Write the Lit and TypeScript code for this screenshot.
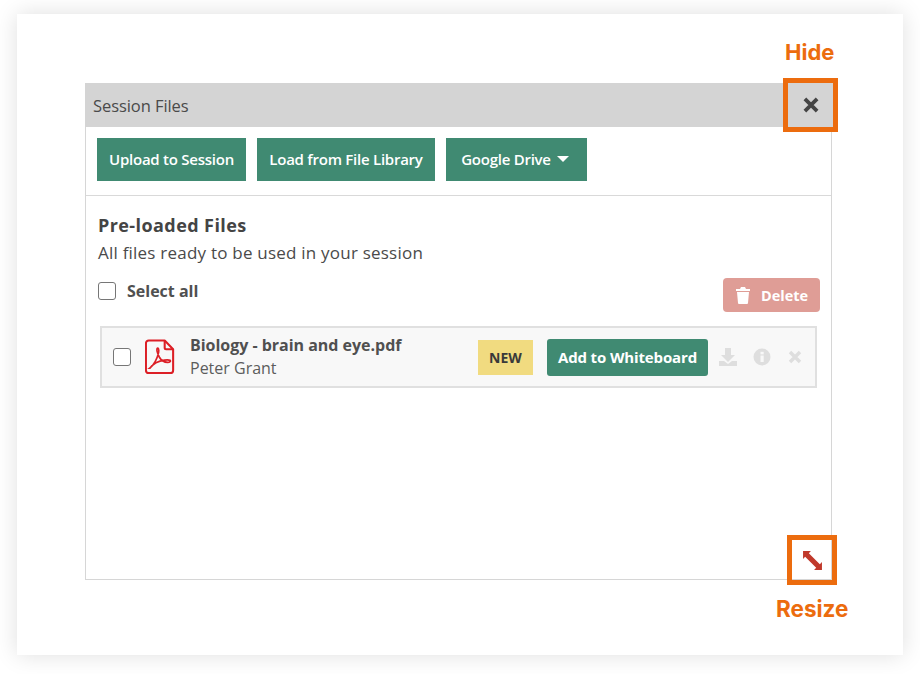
import { LitElement, html, css } from "lit";
import { customElement } from "lit/decorators.js";

@customElement("app-root")
export class AppRoot extends LitElement {
  static styles = css`
    :host { display: block; width: 920px; height: 674px; background: #fff; font-family: "Open Sans", sans-serif; color: #444; overflow: hidden; }
    .stage { box-sizing: border-box; width: 920px; height: 674px; padding: 14px 17px 19px; }
    .card { position: relative; box-sizing: border-box; height: 641px; background: #fff; box-shadow: 0 0 22px rgba(0,0,0,.13); padding: 69px 71px 75px 68px; }
    .panel { box-sizing: border-box; height: 497px; border: 1px solid #d6d6d6; border-top: 0; display: flex; flex-direction: column; background: #fff; }
    .head { height: 44px; margin: 0 -1px; background: #d4d4d4; display: flex; align-items: center; padding: 1px 0 0 8px; box-sizing: border-box; font-size: 16.5px; color: #4a4a4a; letter-spacing: -.07px; }
    .tools { display: flex; gap: 11px; padding: 11px 11px 14px; border-bottom: 1px solid #d9d9d9; }
    .btn { box-sizing: border-box; height: 43px; padding-bottom: 2px; background: #408a72; color: #fff; font-size: 15px; font-weight: 600; display: flex; align-items: center; justify-content: center; letter-spacing: -.25px; }
    .b1 { width: 149px; } .b2 { width: 178px; } .b3 { width: 141px; gap: 6px; padding-right: 3px; }
    .caret { width: 0; height: 0; border: 6px solid transparent; border-top: 6px solid #fff; border-bottom: 0; }
    .body { padding: 17px 11px 0 12px; }
    h2 { margin: 0; font-size: 18px; line-height: 24px; font-weight: 700; color: #444; letter-spacing: .42px; }
    .sub { margin: 4px 0 0; font-size: 17px; line-height: 24px; color: #4a4a4a; letter-spacing: .22px; }
    .selrow { display: flex; justify-content: space-between; align-items: flex-start; margin-top: 13px; }
    .sel { display: flex; align-items: center; gap: 11px; font-size: 16px; font-weight: 700; color: #505050; height: 22px; margin-top: 2px; }
    .cb { box-sizing: border-box; width: 18px; height: 18px; border: 1.5px solid #767676; border-radius: 3px; background: #fff; flex: none; }
    .del { box-sizing: border-box; width: 97px; height: 34px; background: #df9d96; border-radius: 4px; color: #fff; font-size: 14.5px; font-weight: 700; display: flex; align-items: center; justify-content: center; gap: 10px; }
    .row { box-sizing: border-box; height: 62px; margin: 14px 3px 0 2px; border: 2px solid #e0e0e0; background: #f8f8f8; display: flex; align-items: center; padding-left: 11px; }
    .pdf { margin-left: 14px; flex: none; }
    .meta { margin-left: 15px; width: 288px; flex: none; }
    .name { font-size: 16px; font-weight: 700; line-height: 22px; color: #505050; letter-spacing: -.02px; }
    .owner { font-size: 16px; line-height: 24px; color: #5c5c5c; }
    .new { box-sizing: border-box; width: 55px; height: 35px; background: #f1db80; color: #3a3a3a; font-size: 14px; font-weight: 700; display: flex; align-items: center; justify-content: center; flex: none; }
    .add { margin-left: 14px; width: 161px; height: 37px; border-radius: 3px; font-weight: 700; font-size: 15px; letter-spacing: -.13px; flex: none; background: #408a72; color: #fff; display: flex; align-items: center; justify-content: center; }
    .ico { margin-left: 10px; flex: none; display: flex; }
    .ico.info { margin-left: 15px; }
    .ico.rm { margin-left: 17px; }
    .mark { position: absolute; box-sizing: border-box; border: 5px solid #ec6c0e; }
    .hide { left: 766px; top: 64px; width: 55px; height: 54px; background: #d4d4d4; display: flex; align-items: center; justify-content: center; }
    .rsz { left: 770px; top: 521px; width: 50px; height: 50px; display: flex; align-items: center; justify-content: center; }
    .lbl { position: absolute; font-family: Inter, sans-serif; font-weight: 700; color: #ec6c0e; font-size: 22px; line-height: 26px; }
    .l1 { left: 768px; top: 25px; }
    .l2 { left: 759px; top: 582px; font-size: 22.5px; }
  `;

  render() {
    return html`
      <div class="stage">
        <div class="card">
          <div class="panel">
            <div class="head">Session Files</div>
            <div class="tools">
              <div class="btn b1">Upload to Session</div>
              <div class="btn b2">Load from File Library</div>
              <div class="btn b3">Google Drive <span class="caret"></span></div>
            </div>
            <div class="body">
              <h2>Pre-loaded Files</h2>
              <p class="sub">All files ready to be used in your session</p>
              <div class="selrow">
                <div class="sel"><span class="cb"></span>Select all</div>
                <div class="del">
                  <svg width="16" height="18" viewBox="0 0 16 18" fill="#fff"><path d="M1 3h4l1-2h4l1 2h4v2H1z"/><path d="M2 6h12l-1 11a1 1 0 0 1-1 1H4a1 1 0 0 1-1-1z"/></svg>
                  Delete
                </div>
              </div>
              <div class="row">
                <span class="cb"></span>
                <svg class="pdf" width="30" height="36" viewBox="0 0 32 37" fill="none" preserveAspectRatio="none" stroke="#dc1f26" stroke-width="2.2">
                  <path d="M4 1.5h17l9 9V32a3 3 0 0 1-3 3H4a3 3 0 0 1-3-3V4.500a3 3 0 0 1 3-3z" stroke-linejoin="round"/>
                  <path d="M21 1.500V9a1.500 1.500 0 0 0 1.500 1.500H30"/>
                  <path d="M5 30c4-3 8-10 9.500-16 .6-3-.4-5-1.300-4.500-1 .8 0 5 2 9 2 3.500 5 5.500 9 5.500 2.500 0 3.500-1.500 2.500-2-2-1-9-.5-15 2.500-2.500 1.500-5 3.500-6.500 5.500z" stroke-width="1.800"/>
                </svg>
                <div class="meta">
                  <div class="name">Biology - brain and eye.pdf</div>
                  <div class="owner">Peter Grant</div>
                </div>
                <div class="new">NEW</div>
                <div class="add">Add to Whiteboard</div>
                <span class="ico"><svg width="20" height="20" viewBox="0 0 20 20" fill="#dedede"><path d="M7 1h6v7h4l-7 7-7-7h4z"/><path d="M1 14h5l4 3 4-3h5v5H1z"/></svg></span>
                <span class="ico info"><svg width="18" height="18" viewBox="0 0 18 18"><circle cx="9" cy="9" r="8.500" fill="#dedede"/><rect x="7.500" y="7.500" width="3.200" height="6.500" fill="#f8f8f8"/><rect x="7.500" y="3.800" width="3.200" height="2.600" fill="#f8f8f8"/></svg></span>
                <span class="ico rm"><svg width="14" height="14" viewBox="0 0 14 14" stroke="#dedede" stroke-width="3.400"><path d="M2 2l10 10M12 2L2 12"/></svg></span>
              </div>
            </div>
          </div>
          <div class="mark hide"><svg width="16" height="16" viewBox="0 0 17 17" stroke="#444" stroke-width="4"><path d="M2 2l13 13M15 2L2 15"/></svg></div>
          <div class="mark rsz"><svg width="21" height="21" viewBox="0 0 20 20" fill="#c0392b"><path d="M1 1H8.500L6.500 3 17 13.500 19 11.500V19H11.500L13.500 17 3 6.500 1 8.500Z"/></svg></div>
          <div class="lbl l1">Hide</div>
          <div class="lbl l2">Resize</div>
        </div>
      </div>
    `;
  }
}
